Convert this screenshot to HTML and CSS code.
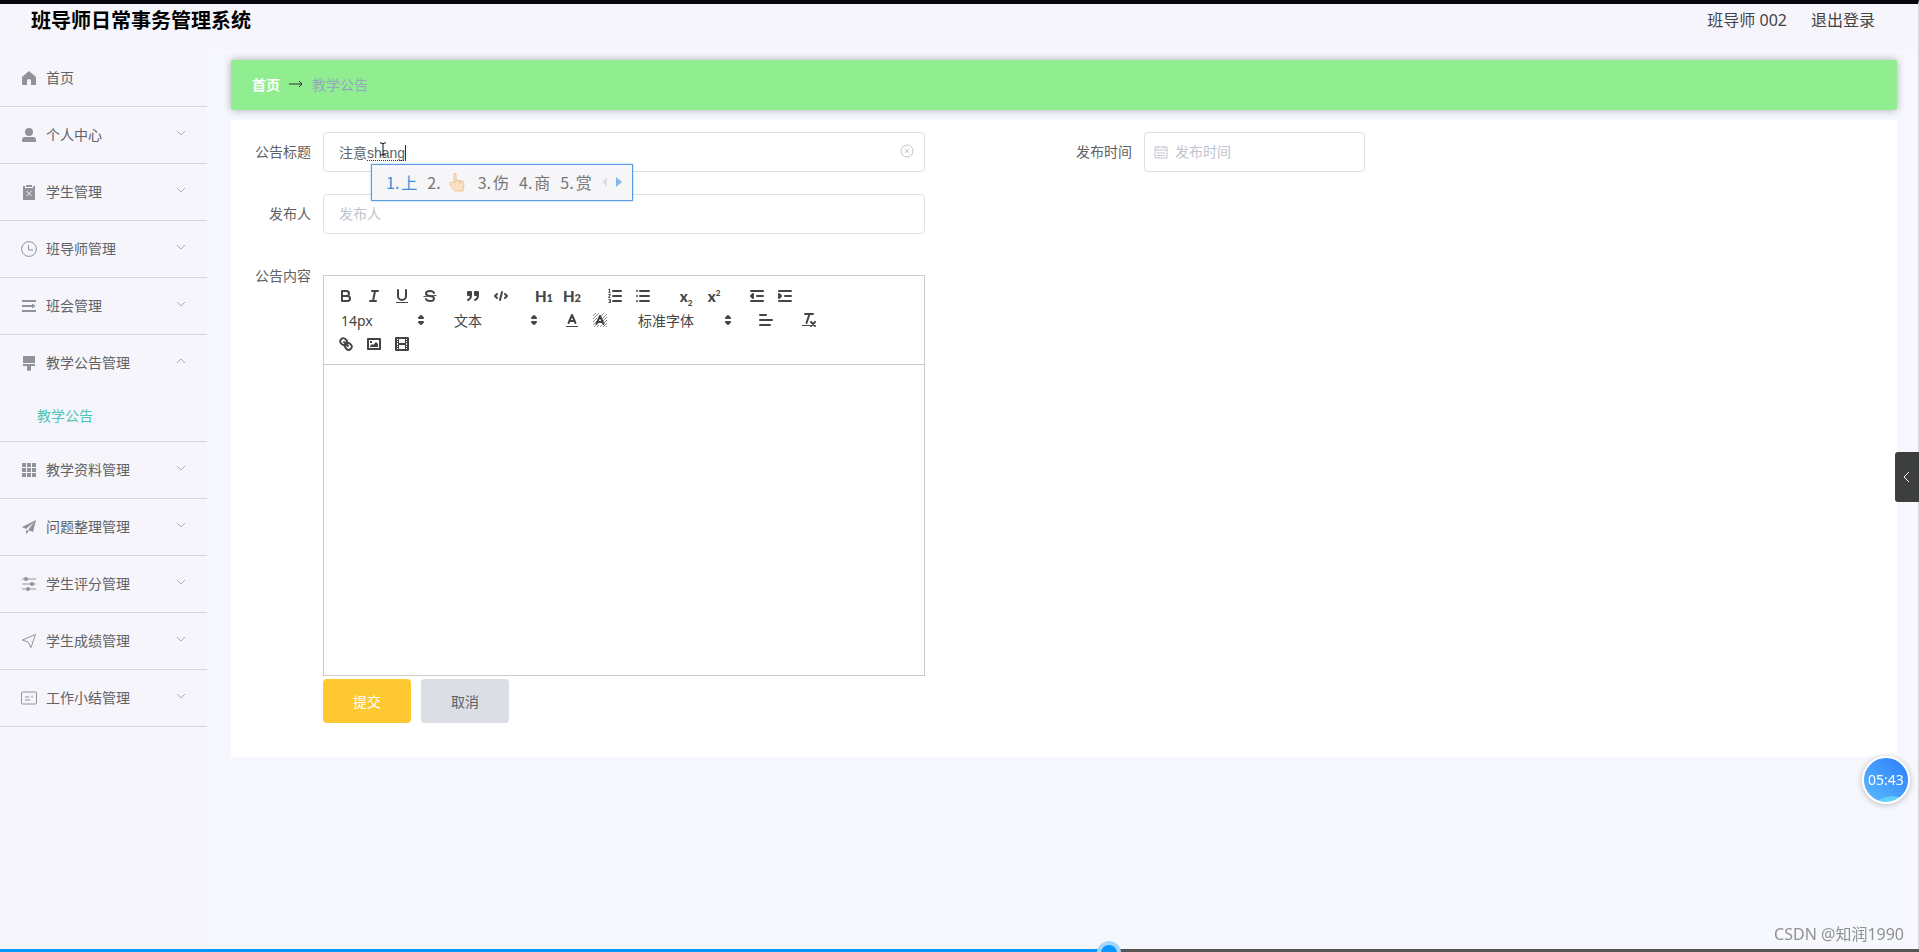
FILE: index.html
```html
<!DOCTYPE html>
<html lang="zh-CN">
<head>
  <meta charset="UTF-8">
  <meta name="viewport" content="width=device-width, initial-scale=1.0">
  <title>班导师日常事务管理系统</title>
  <link rel="stylesheet" href="styles.css">
</head>
<body>
  <header class="header">
    <h1 class="title">班导师日常事务管理系统</h1>
    <div class="user">
      <span>班导师 002</span>
      <a href="#">退出登录</a>
    </div>
  </header>

  <div class="container">
    <nav class="sidebar">
      <ul class="menu">
        <li><a href="#" class="menu-item">
          <svg class="icon" viewBox="0 0 16 16"><path class="fill" d="M8 1L1 7v8h5v-4a2 2 0 0 1 4 0v4h5V7z"/></svg>
          <span>首页</span></a></li>
        <li><a href="#" class="menu-item">
          <svg class="icon" viewBox="0 0 16 16"><circle class="fill" cx="8" cy="5" r="4"/><path class="fill" d="M1 15v-2q0-3 3-3h8q3 0 3 3v2z"/></svg>
          <span>个人中心</span><svg class="arrow" viewBox="0 0 12 12"><path d="M2 4l4 4 4-4"/></svg></a></li>
        <li><a href="#" class="menu-item">
          <svg class="icon" viewBox="0 0 16 16"><path class="fill" d="M2 2h2v2h8V2h2v14H2zM5 1h6v2H5z"/><path class="cut" d="M5.500 7l5 5M10.500 7l-5 5"/></svg>
          <span>学生管理</span><svg class="arrow" viewBox="0 0 12 12"><path d="M2 4l4 4 4-4"/></svg></a></li>
        <li><a href="#" class="menu-item">
          <svg class="icon" viewBox="0 0 16 16"><circle cx="8" cy="8" r="7.400"/><path d="M7.500 4v5H12"/></svg>
          <span>班导师管理</span><svg class="arrow" viewBox="0 0 12 12"><path d="M2 4l4 4 4-4"/></svg></a></li>
        <li><a href="#" class="menu-item">
          <svg class="icon" viewBox="0 0 16 16"><path class="thick" d="M1 3h14M1 8h10M1 13h14"/><path class="fill" d="M11 5.500L14.500 8 11 10.500z"/></svg>
          <span>班会管理</span><svg class="arrow" viewBox="0 0 12 12"><path d="M2 4l4 4 4-4"/></svg></a></li>
        <li><a href="#" class="menu-item">
          <svg class="icon" viewBox="0 0 16 16"><path class="fill" d="M2 1h12v7H2zM2 9h12v2h-4v4q-2 2-4 0v-4H2z"/></svg>
          <span>教学公告管理</span><svg class="arrow" viewBox="0 0 12 12"><path d="M2 8l4-4 4 4"/></svg></a>
          <a href="#" class="submenu-item">教学公告</a></li>
        <li><a href="#" class="menu-item">
          <svg class="icon" viewBox="0 0 16 16"><path class="fill" d="M1 1h4v4H1zM6 1h4v4H6zM11 1h4v4h-4zM1 6h4v4H1zM6 6h4v4H6zM11 6h4v4h-4zM1 11h4v4H1zM6 11h4v4H6zM11 11h4v4h-4z"/></svg>
          <span>教学资料管理</span><svg class="arrow" viewBox="0 0 12 12"><path d="M2 4l4 4 4-4"/></svg></a></li>
        <li><a href="#" class="menu-item">
          <svg class="icon" viewBox="0 0 16 16"><path class="fill" d="M15 1L1 8l4 2 8-7-6 8 5 2zM5 11v4l3-3z"/></svg>
          <span>问题整理管理</span><svg class="arrow" viewBox="0 0 12 12"><path d="M2 4l4 4 4-4"/></svg></a></li>
        <li><a href="#" class="menu-item">
          <svg class="icon" viewBox="0 0 16 16"><path d="M1 3h14M1 8h14M1 13h14"/><circle class="fill" cx="5" cy="3" r="2"/><circle class="fill" cx="11" cy="8" r="2"/><circle class="fill" cx="7" cy="13" r="2"/></svg>
          <span>学生评分管理</span><svg class="arrow" viewBox="0 0 12 12"><path d="M2 4l4 4 4-4"/></svg></a></li>
        <li><a href="#" class="menu-item">
          <svg class="icon" viewBox="0 0 16 16"><path d="M14.500 1.500L1.500 7l5.500 2 3 5.500z"/></svg>
          <span>学生成绩管理</span><svg class="arrow" viewBox="0 0 12 12"><path d="M2 4l4 4 4-4"/></svg></a></li>
        <li><a href="#" class="menu-item">
          <svg class="icon" viewBox="0 0 16 16"><rect x="0.500" y="2" width="15" height="12" rx="1"/><path d="M4 7h4M4 10h5M11 5.500v2"/></svg>
          <span>工作小结管理</span><svg class="arrow" viewBox="0 0 12 12"><path d="M2 4l4 4 4-4"/></svg></a></li>
      </ul>
    </nav>

    <main class="main">
      <div class="breadcrumb">
        <a href="#">首页</a>
        <svg class="crumb-arrow" viewBox="0 0 14 8"><path d="M0 4h13M10 1l3 3-3 3"/></svg>
        <span>教学公告</span>
      </div>

      <form class="form">
        <div class="form-row">
          <div class="form-item">
            <label for="title">公告标题</label>
            <div class="field">
              <input id="title" type="text" value="注意shang">
              <button type="button" class="clear" aria-label="清空">
                <svg viewBox="0 0 14 14"><circle cx="7" cy="7" r="6"/><path d="M5 5l4 4M9 5l-4 4"/></svg>
              </button>
              <span class="composing"></span>
              <svg class="mouse" viewBox="0 0 8 14"><path d="M1 1h2l1 1 1-1h2M4 2v10M1 13h2l1-1 1 1h2"/></svg>
              <!-- input method candidates -->
              <div class="ime">
                <span class="active">1.<b>上</b></span>
                <span>2.<svg class="hand" viewBox="0 0 16 20"><path d="M5 11V2q1-2 2 0v6l6 1q2 0 2 3l-1 7H6l-5-6q-1-2 1-3z"/><path class="crease" d="M7 8v3M10 9v3M12 9v3"/></svg></span>
                <span>3.<b>伤</b></span>
                <span>4.<b>商</b></span>
                <span>5.<b>赏</b></span>
                <svg class="pager" viewBox="0 0 20 10"><path class="prev" d="M5 0L0 5l5 5z"/><path class="next" d="M14 0l6 5-6 5z"/></svg>
              </div>
            </div>
          </div>
          <div class="form-item">
            <label for="time">发布时间</label>
            <div class="field date">
              <svg class="calendar" viewBox="0 0 14 14"><path d="M1 2h12v11H1zM1 5h12M4 1v2M10 1v2M3 8h8M3 10.500h8"/></svg>
              <input id="time" type="text" placeholder="发布时间">
            </div>
          </div>
        </div>

        <div class="form-row">
          <div class="form-item">
            <label for="author">发布人</label>
            <div class="field"><input id="author" type="text" placeholder="发布人"></div>
          </div>
        </div>

        <div class="form-row">
          <div class="form-item">
            <label for="content">公告内容</label>
            <div class="field editor">
              <div class="toolbar">
                <span class="formats">
                  <button type="button" aria-label="加粗"><svg viewBox="0 0 18 18"><path d="M5 4h4.500a2.500 2.500 0 0 1 0 5H5zM5 9h5.500a2.500 2.500 0 0 1 0 5H5z"/></svg></button>
                  <button type="button" aria-label="斜体"><svg viewBox="0 0 18 18"><path d="M7 4h6M5 14h6M8 14l2-10"/></svg></button>
                  <button type="button" aria-label="下划线"><svg viewBox="0 0 18 18"><path d="M5 3v6a4 4 0 0 0 8 0V3"/><path class="thin" d="M3 15.500h12"/></svg></button>
                  <button type="button" aria-label="删除线"><svg viewBox="0 0 18 18"><path class="thin" d="M15.500 8.500l-13 1"/><path d="M13 6c-.5-1.300-2-2-4-2-2.300 0-4 1-4 2.500C5 8 6.500 8.700 9 9s4 1 4 2.500S11.300 14 9 14c-2 0-3.500-.7-4-2"/></svg></button>
                </span>
                <span class="formats">
                  <button type="button" aria-label="引用"><svg viewBox="0 0 18 18"><path class="solid" d="M4 5h3v3H4zM11 5h3v3h-3z"/><path d="M4 5h3v3H4zM11 5h3v3h-3zM7 8c0 4-3 5-3 5M14 8c0 4-3 5-3 5"/></svg></button>
                  <button type="button" aria-label="代码"><svg viewBox="0 0 18 18"><path d="M5 7L3 9l2 2M13 7l2 2-2 2M10 5L8 13"/></svg></button>
                </span>
                <span class="formats">
                  <button type="button" class="glyph">H<small>1</small></button>
                  <button type="button" class="glyph">H<small>2</small></button>
                </span>
                <span class="formats">
                  <button type="button" aria-label="有序列表"><svg viewBox="0 0 18 18"><path d="M7 4h8M7 9h8M7 14h8"/><path class="thin" d="M2.500 2.500l1-.5v3.500M2.500 5.500h2M2.500 7.500h2L2.500 10.500h2M2.500 12.500h2v3h-2M3 14h1"/></svg></button>
                  <button type="button" aria-label="无序列表"><svg viewBox="0 0 18 18"><path d="M6 4h9M6 9h9M6 14h9M3 4v0M3 9v0M3 14v0"/></svg></button>
                </span>
                <span class="formats">
                  <button type="button" class="glyph">x<sub>2</sub></button>
                  <button type="button" class="glyph">x<sup>2</sup></button>
                </span>
                <span class="formats">
                  <button type="button" aria-label="减少缩进"><svg viewBox="0 0 18 18"><path d="M3 14h12M3 4h12M9 9h6"/><path class="arrowhead" d="M5 7v4L3 9z"/></svg></button>
                  <button type="button" aria-label="增加缩进"><svg viewBox="0 0 18 18"><path d="M3 14h12M3 4h12M9 9h6"/><path class="arrowhead" d="M3 7v4l2-2z"/></svg></button>
                </span>
                <span class="formats picker">
                  <select aria-label="字号"><option>14px</option></select>
                  <svg viewBox="0 0 18 18"><path class="arrowhead" d="M7 11l2 2 2-2zM7 7l2-2 2 2z"/></svg>
                </span>
                <span class="formats picker">
                  <select aria-label="标题"><option>文本</option></select>
                  <svg viewBox="0 0 18 18"><path class="arrowhead" d="M7 11l2 2 2-2zM7 7l2-2 2 2z"/></svg>
                </span>
                <span class="formats">
                  <button type="button" aria-label="文字颜色"><svg viewBox="0 0 18 18"><path d="M5.500 12L9 4l3.500 8M6.500 10h5"/><path class="thin" d="M3 15.500h12"/></svg></button>
                  <button type="button" aria-label="背景颜色"><svg viewBox="0 0 18 18"><path class="hatch" d="M2 5l3-3M2 8l6-6M2 11l4-4M2 14l4-4M3 16l3-3M6 16l2-2M9 16l2-2M12 16l4-4M12 13l4-4M12 10l4-4M11 8l5-5M10 5l3-3M15 16l1-1"/><path d="M5.500 13L9 5l3.500 8M6.500 11h5"/></svg></button>
                </span>
                <span class="formats picker font">
                  <select aria-label="字体"><option>标准字体</option></select>
                  <svg viewBox="0 0 18 18"><path class="arrowhead" d="M7 11l2 2 2-2zM7 7l2-2 2 2z"/></svg>
                </span>
                <span class="formats">
                  <button type="button" aria-label="对齐"><svg viewBox="0 0 18 18"><path d="M3 9h12M3 14h10M3 4h6"/></svg></button>
                </span>
                <span class="formats">
                  <button type="button" aria-label="清除格式"><svg viewBox="0 0 18 18"><path d="M5 3h8M6.500 12L9.500 3M11 11l4 4M15 11l-4 4"/><path class="thin" d="M2 14.500h8"/></svg></button>
                </span>
                <span class="formats">
                  <button type="button" aria-label="链接"><svg viewBox="0 0 18 18"><path d="M7 7l4 4M8.900 4.577a3.476 3.476 0 0 1 .36 4.679A3.476 3.476 0 0 1 4.577 8.900C3.185 7.500 2.035 6.400 4.217 4.217S7.500 3.185 8.900 4.577ZM13.423 9.100a3.476 3.476 0 0 0-4.679-.36 3.476 3.476 0 0 0 .36 4.679c1.392 1.392 2.500 2.542 4.679.36S14.815 10.500 13.423 9.100Z"/></svg></button>
                  <button type="button" aria-label="图片"><svg viewBox="0 0 18 18"><path d="M3 4h12v10H3z"/><path class="block" d="M5 12v-1l2-2 1 1 3-3 2 2v3zM5 6h2v2H5z"/></svg></button>
                  <button type="button" aria-label="视频"><svg viewBox="0 0 18 18"><path d="M3 3h12v12H3z"/><path class="block" d="M5 3h1v12H5zM12 3h1v12h-1zM5 8h8v2H5zM3 5h3v1H3zM3 7h3v1H3zM3 10h3v1H3zM3 12h3v1H3zM12 5h3v1h-3zM12 7h3v1h-3zM12 10h3v1h-3zM12 12h3v1h-3z"/></svg></button>
                </span>
              </div>
              <textarea id="content"></textarea>
            </div>
          </div>
        </div>

        <div class="buttons">
          <button type="submit" class="btn primary">提交</button>
          <button type="button" class="btn">取消</button>
        </div>
      </form>
    </main>
  </div>

  <button type="button" class="drawer" aria-label="展开">
    <svg viewBox="0 0 12 12"><path d="M8 1L3 6l5 5"/></svg>
  </button>
  <div class="timer">05:43</div>
  <div class="watermark">CSDN @知润1990</div>
  <div class="progress"><div class="played"></div></div>
</body>
</html>
```

FILE: styles.css
```css
* {
  box-sizing: border-box;
}
body {
  margin: 0;
  min-height: 100vh;
  display: flex;
  flex-direction: column;
  border-top: 4px solid #08050c;
  border-right: 1px solid #d8d8de;
  background: #f6f8fd;
  font-family: "Noto Sans", "Noto Sans CJK SC", sans-serif;
  font-size: 14px;
  color: #606266;
}
a {
  color: inherit;
  text-decoration: none;
}
button, input, select, textarea {
  font: inherit;
  color: inherit;
}
svg {
  fill: none;
  stroke: currentColor;
}

/* header */
.header {
  display: flex;
  justify-content: space-between;
  height: 46px;
  padding: 0 43px 0 31px;
  background: #f5f5fb;
}
.title {
  margin: 0;
  font-size: 20px;
  line-height: 34px;
  color: #000;
}
.user {
  display: flex;
  gap: 24px;
  font-size: 16px;
  line-height: 32px;
  color: #444;
}

/* sidebar */
.container {
  flex: 1;
  display: flex;
}
.sidebar {
  width: 207px;
  flex-shrink: 0;
  background: #f5f5fb;
}
.menu {
  list-style: none;
  margin: 0;
  padding: 0;
}
.menu li {
  border-bottom: 1px solid #d5d5db;
}
.menu-item {
  display: flex;
  align-items: center;
  gap: 9px;
  height: 56px;
  padding: 0 20px 2px 21px;
}
.icon {
  width: 16px;
  height: 16px;
  margin-top: 2px;
  color: #909399;
}
.icon .fill {
  fill: currentColor;
  stroke: none;
}
.icon .cut {
  stroke: #f5f5fb;
}
.icon .thick {
  stroke-width: 2;
}
.arrow {
  width: 12px;
  height: 12px;
  margin: 0 0 2px auto;
  color: #a9abb0;
}
.submenu-item {
  display: block;
  padding-left: 37px;
  line-height: 50px;
  color: #4fc3b5;
}

/* content */
.main {
  flex: 1;
  padding: 10px 21px 0 24px;
}
.breadcrumb {
  display: flex;
  align-items: center;
  gap: 9px;
  height: 50px;
  padding: 0 21px 2px;
  margin-bottom: 10px;
  border-radius: 2px;
  background: #90ee90;
  box-shadow: 0 0 8px rgba(0, 0, 0, 0.3);
  color: #97a8be;
}
.breadcrumb a {
  font-weight: bold;
  color: #fff;
}
.crumb-arrow {
  width: 14px;
  height: 8px;
  color: #303133;
}
.form {
  padding: 12px 12px 34px;
  background: #fff;
}
.form-row {
  display: grid;
  grid-template-columns: 1fr 1fr;
  margin-bottom: 22px;
}
.form-item {
  display: flex;
}
.form-item label {
  width: 80px;
  flex-shrink: 0;
  padding-right: 12px;
  text-align: right;
  line-height: 40px;
}
.field {
  position: relative;
  flex: 1;
  max-width: 602px;
}
.field.date {
  max-width: 221px;
}
.field input {
  display: block;
  width: 100%;
  height: 40px;
  padding: 0 15px;
  border: 1px solid #dcdfe6;
  border-radius: 4px;
  background: #fff;
  outline: none;
  font-family: "Liberation Sans", "Noto Sans CJK SC", sans-serif;
}
.field.date input {
  padding-left: 30px;
}
.field ::placeholder {
  color: #c0c4cc;
}
.calendar {
  position: absolute;
  left: 10px;
  top: 13px;
  width: 14px;
  height: 14px;
  color: #c0c4cc;
}
.clear {
  position: absolute;
  right: 11px;
  top: 12px;
  width: 14px;
  height: 14px;
  padding: 0;
  border: 0;
  background: none;
  color: #c0c4cc;
}
.clear svg {
  display: block;
}

/* input method */
.composing {
  position: absolute;
  left: 44px;
  top: 13px;
  width: 39px;
  height: 16px;
  border-right: 1px solid #333;
  border-bottom: 1px dotted #333;
}
.mouse {
  position: absolute;
  left: 56px;
  top: 10px;
  width: 8px;
  height: 14px;
  color: #111;
}
.ime {
  position: absolute;
  z-index: 1;
  left: 48px;
  top: 32px;
  display: flex;
  align-items: center;
  gap: 10px;
  height: 37px;
  padding: 0 10px 2px 14px;
  border: 1px solid #5b9be0;
  background: #f6f5f8;
  box-shadow: 0 0 2px #8fc0f0;
  font: 16px "Noto Sans CJK SC", sans-serif;
  color: #777;
}
.ime span {
  display: flex;
  align-items: center;
  gap: 2px;
}
.ime b {
  font-weight: normal;
}
.ime .active {
  color: #3b8fdc;
}
.hand {
  width: 16px;
  height: 22px;
  margin: 0 3px 0 6px;
  fill: #fbe0c4;
  stroke: #e8c7a4;
}
.hand .crease {
  fill: none;
}
.pager {
  width: 20px;
  height: 10px;
  stroke: none;
}
.prev {
  fill: #dcdce2;
}
.next {
  fill: #86b8f0;
}

/* rich text editor */
.editor {
  margin-top: 19px;
}
.toolbar {
  display: flex;
  flex-wrap: wrap;
  padding: 8px;
  border: 1px solid #ccc;
  color: #444;
}
.formats {
  display: flex;
  margin-right: 15px;
}
.formats button {
  width: 28px;
  height: 24px;
  padding: 3px 5px;
  border: 0;
  background: none;
}
.formats svg {
  display: block;
  width: 18px;
  height: 18px;
  stroke-width: 2;
  stroke-linecap: round;
  stroke-linejoin: round;
}
.formats .thin, .formats .hatch {
  stroke-width: 1;
  stroke-linecap: butt;
}
.formats .hatch {
  opacity: 0.6;
}
.formats .solid {
  fill: currentColor;
  stroke-width: 1;
}
.formats .arrowhead {
  fill: currentColor;
}
.formats .block {
  fill: currentColor;
  stroke: none;
}
.formats .glyph {
  padding: 0;
  font-family: Lato, sans-serif;
  font-weight: 900;
  font-size: 15px;
  line-height: 24px;
}
.glyph small {
  font-size: 11px;
}
.glyph sub, .glyph sup {
  font-size: 8px;
  line-height: 1;
}
.picker {
  position: relative;
  width: 98px;
}
.picker.font {
  width: 108px;
}
.picker select {
  width: 100%;
  height: 24px;
  padding: 0 9px;
  border: 0;
  background: none;
  appearance: none;
}
.picker svg {
  position: absolute;
  right: 0;
  top: 3px;
  pointer-events: none;
}
.editor textarea {
  display: block;
  width: 100%;
  height: 311px;
  padding: 12px 15px;
  border: 1px solid #ccc;
  border-top: 0;
  outline: none;
  resize: none;
}
.buttons {
  display: flex;
  gap: 10px;
  margin-top: -19px;
  padding-left: 80px;
}
.btn {
  width: 88px;
  height: 44px;
  border: 0;
  border-radius: 4px;
  background: #dcdee6;
}
.btn.primary {
  background: #fdc831;
  color: #fff;
}

/* things floating over the page */
.drawer {
  position: fixed;
  right: 0;
  top: 452px;
  width: 24px;
  height: 50px;
  padding: 0 6px;
  border: 0;
  border-radius: 3px 0 0 3px;
  background: #3d3f3e;
  color: #fff;
}
.timer {
  position: fixed;
  right: 9px;
  top: 756px;
  width: 48px;
  height: 48px;
  border: 2px solid #fff;
  border-radius: 50%;
  background: radial-gradient(circle at 65% 150%, #5fd0ff 38%, transparent 39%), linear-gradient(225deg, #2b7dfa, #5cbcff);
  box-shadow: 0 1px 6px rgba(0, 0, 0, 0.25);
  text-align: center;
  line-height: 44px;
  color: #fff;
}
.watermark {
  position: fixed;
  right: 15px;
  bottom: 7px;
  font-size: 16px;
  color: #909196;
}
.progress {
  position: fixed;
  left: 0;
  right: 0;
  bottom: 0;
  height: 3px;
  background: #555;
}
.played {
  position: relative;
  width: 58%;
  height: 3px;
  background: #0897ff;
}
.played::after {
  content: "";
  position: absolute;
  right: -8px;
  top: -8px;
  width: 16px;
  height: 16px;
  border: 4px solid #a6d6fd;
  border-radius: 50%;
  background: #0897ff;
}
```
